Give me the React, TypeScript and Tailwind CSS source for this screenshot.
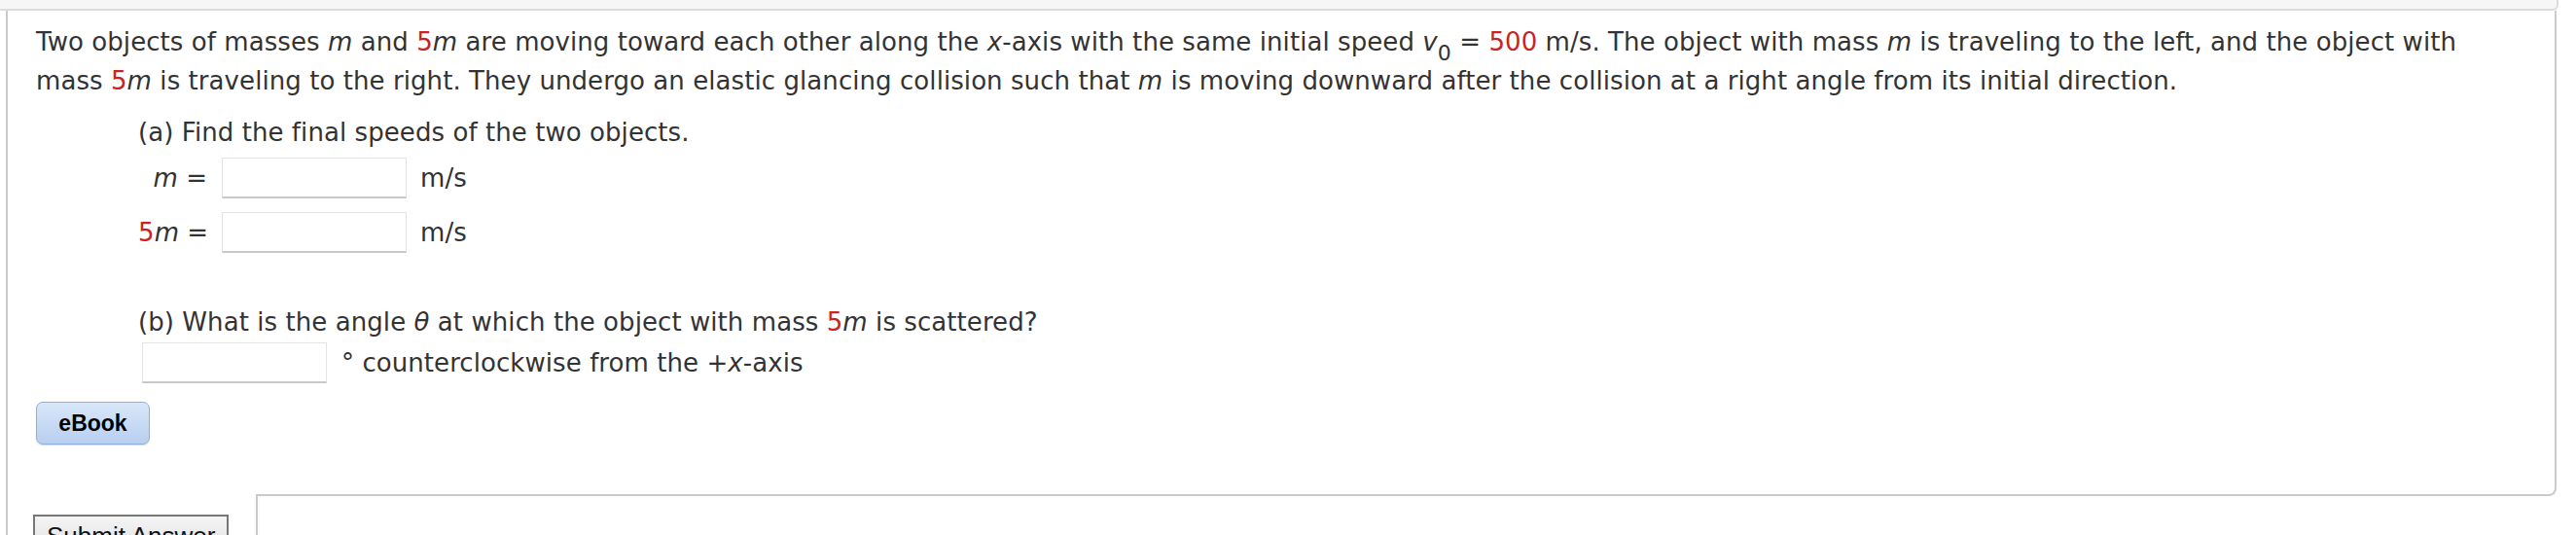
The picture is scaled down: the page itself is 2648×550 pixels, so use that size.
const red = "text-[#cc2222]";

function AnswerBox() {
  return (
    <span className="block h-[42px] w-[190px] border border-[#e4e4e4] border-b-2 border-b-[#c8c8c8] bg-white" />
  );
}

function SpeedRow({ label }: { label: React.ReactNode }) {
  return (
    <div className="flex items-center">
      <span className="w-[71px] text-right whitespace-nowrap">{label}</span>
      <span className="ml-[15px]">
        <AnswerBox />
      </span>
      <span className="ml-[14px]">m/s</span>
    </div>
  );
}

export default function App() {
  return (
    <div className="min-h-[550px] bg-white font-['DejaVu_Sans',Verdana,sans-serif] text-[26px] leading-[40px] tracking-[0.07px] text-[#333333]">
      {/* bottom edge of the previous panel */}
      <div className="mr-[18px] h-[11px] rounded-br-[6px] border-r-2 border-b-2 border-[#dcdcdc] bg-[#f6f6f6]" />

      {/* question panel */}
      <div className="ml-[6px] mr-[20px] rounded-br-[8px] border-x-2 border-b-2 border-[#cacaca] pt-[12px] pr-[24px] pb-[51px] pl-[29px]">
        <p className="whitespace-nowrap">
          Two objects of masses <i>m</i> and <span className={red}>5</span>
          <i>m</i> are moving toward each other along the <i>x</i>-axis with the
          same initial speed <i>v</i>
          <sub className="-bottom-[10px] text-[22px]">0</sub> ={" "}
          <span className={red}>500</span> m/s. The object with mass <i>m</i> is
          traveling to the left, and the object with
          <br />
          mass <span className={red}>5</span>
          <i>m</i> is traveling to the right. They undergo an elastic glancing
          collision such that <i>m</i> is moving downward after the collision at
          a right angle from its initial direction.
        </p>

        <div className="mt-[13px] pl-[105px]">
          <p>(a) Find the final speeds of the two objects.</p>
          <div className="mt-[6px] flex flex-col gap-[14px]">
            <SpeedRow label={<><i>m</i> =</>} />
            <SpeedRow
              label={
                <>
                  <span className={red}>5</span>
                  <i>m</i> =
                </>
              }
            />
          </div>

          <p className="mt-[51px]">
            (b) What is the angle <i>θ</i> at which the object with mass{" "}
            <span className={red}>5</span>
            <i>m</i> is scattered?
          </p>
          <div className="mt-[1px] flex items-center pl-[4px]">
            <AnswerBox />
            <span className="ml-[15px] whitespace-nowrap">
              ° counterclockwise from the +<i>x</i>-axis
            </span>
          </div>
        </div>

        <button className="mt-[19px] flex h-[44px] w-[117px] items-center justify-center rounded-[7px] border border-[#8eaedb] bg-linear-to-b from-[#d9e7f9] to-[#b8cff0] font-['Liberation_Sans',Arial,sans-serif] text-[23px] font-bold tracking-normal text-black shadow-[0_1px_1px_rgba(0,0,0,0.15)]">
          eBook
        </button>
      </div>

      {/* submit tab */}
      <div className="relative -mt-[2px] ml-[6px] w-[259px] border-x-2 border-[#cacaca] bg-white pt-[21px] pl-[26px]">
        <button className="border-2 border-[#777777] bg-linear-to-b from-[#f5f5f5] to-[#dddddd] px-[12px] py-[5px] font-['Liberation_Sans',Arial,sans-serif] text-[26px] leading-[30px] tracking-normal text-[#111111]">
          Submit Answer
        </button>
      </div>
    </div>
  );
}
